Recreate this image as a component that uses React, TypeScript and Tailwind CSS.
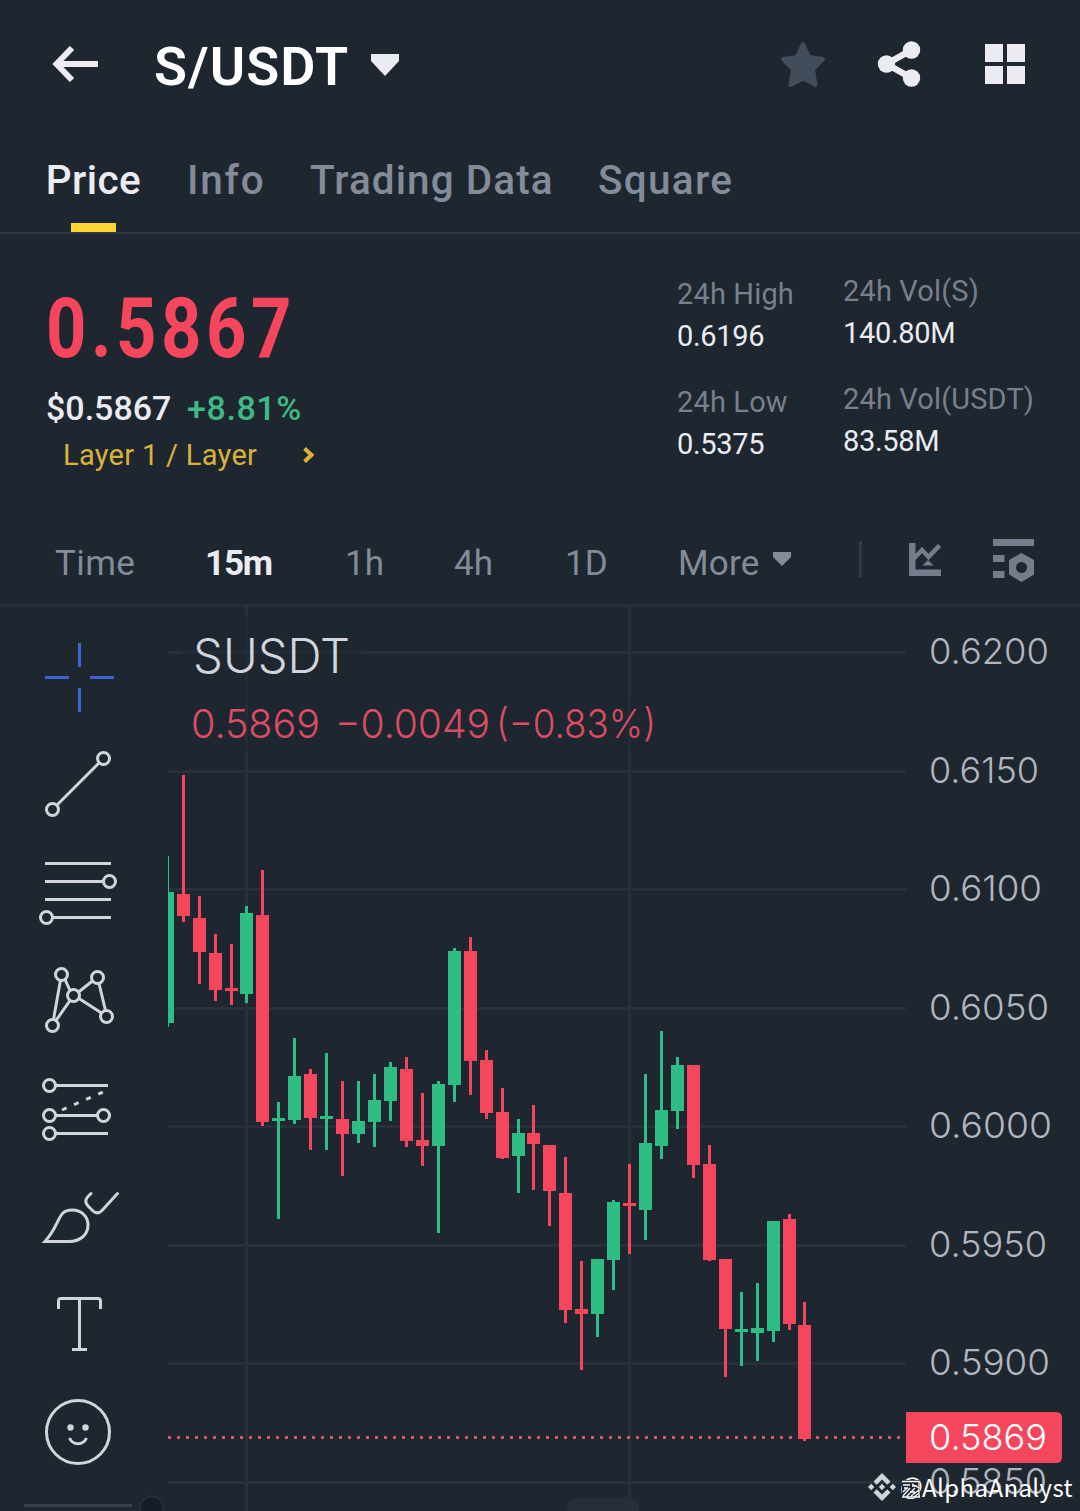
import React from "react";

const RED = "#f6465d";
const GREEN = "#2ebd85";

// [x, high, body top, body bottom, low, up]
const candles: [number, number, number, number, number, number][] = [
  [167.5, 856, 892, 1023, 1027, 1],
  [183.5, 775, 894, 916, 922, 0],
  [199.5, 896, 918, 952, 984, 0],
  [215.5, 934, 953, 990, 1001, 0],
  [231.5, 944, 988, 991, 1005, 0],
  [246.5, 906, 913, 994, 1003, 1],
  [262.5, 870, 915, 1122, 1126, 0],
  [278.5, 1102, 1118, 1121, 1219, 1],
  [294.5, 1038, 1076, 1120, 1124, 1],
  [310.5, 1069, 1074, 1118, 1150, 0],
  [326.5, 1053, 1116, 1119, 1150, 1],
  [342.5, 1081, 1119, 1134, 1176, 0],
  [358.5, 1081, 1121, 1134, 1143, 1],
  [374.5, 1074, 1100, 1122, 1147, 1],
  [390.5, 1062, 1067, 1101, 1121, 1],
  [406.5, 1057, 1069, 1141, 1147, 0],
  [422.5, 1093, 1140, 1146, 1166, 0],
  [438.5, 1081, 1084, 1146, 1233, 1],
  [454.5, 948, 951, 1085, 1102, 1],
  [470.5, 937, 951, 1061, 1095, 0],
  [486.5, 1050, 1060, 1113, 1119, 0],
  [502.5, 1088, 1112, 1158, 1159, 0],
  [518.5, 1119, 1133, 1156, 1193, 1],
  [533.5, 1105, 1133, 1144, 1190, 0],
  [549.5, 1145, 1145, 1191, 1226, 0],
  [565.5, 1157, 1193, 1310, 1323, 0],
  [581.5, 1261, 1309, 1314, 1370, 0],
  [597.5, 1259, 1259, 1314, 1337, 1],
  [613.5, 1200, 1202, 1260, 1290, 1],
  [629.5, 1164, 1203, 1206, 1254, 0],
  [645.5, 1074, 1143, 1210, 1240, 1],
  [661.5, 1031, 1110, 1146, 1159, 1],
  [677.5, 1057, 1065, 1111, 1129, 1],
  [693.5, 1065, 1065, 1165, 1178, 0],
  [709.5, 1145, 1164, 1260, 1261, 0],
  [725.5, 1259, 1259, 1329, 1377, 0],
  [741.5, 1292, 1329, 1332, 1366, 1],
  [757.5, 1283, 1328, 1333, 1361, 1],
  [773.5, 1221, 1221, 1331, 1342, 1],
  [789.5, 1214, 1219, 1324, 1330, 0],
  [804.5, 1302, 1325, 1439, 1441, 0],
];

// [label, y, text width]
const priceLevels: [string, number, number][] = [
  ["0.6200", 652.5, 120],
  ["0.6150", 771.5, 110],
  ["0.6100", 889.5, 113],
  ["0.6050", 1008.5, 120],
  ["0.6000", 1126.5, 123],
  ["0.5950", 1245.5, 118],
  ["0.5900", 1363.5, 121],
  ["0.5850", 1482.5, 118],
];

const Header = () => {
  return (
    <header className="flex h-[128px] items-center pl-[52px] pr-[55px]">
      <svg width="46" height="36" viewBox="0 0 46 36" className="shrink-0">
        <path
          d="M20 2 L4.5 18 L20 34 M4 18 H46"
          fill="none"
          stroke="#eaecf2"
          strokeWidth="6"
        />
      </svg>
      <h1 className="ml-[56px] w-[217px] shrink-0 whitespace-nowrap pt-[6px] text-[54px] font-semibold leading-[60px] tracking-[1.1px] text-white">
        S/USDT
      </h1>
      <svg width="28" height="22" viewBox="0 0 28 22" className="mt-[2px] shrink-0">
        <path d="M0 0 H28 V7 L14 22 L0 7 Z" fill="#eaecf2" />
      </svg>
      <div className="ml-auto flex items-center">
        <svg width="46" height="47" viewBox="0 0 46 47" className="shrink-0">
          <path
            d="M23 3 L29 16 L43 18 L33 28.500 L35.500 44 L23 37.500 L10.500 44 L13 28.500 L3 18 L17 16 Z"
            fill="#434c5a"
            stroke="#434c5a"
            strokeWidth="4"
            strokeLinejoin="round"
          />
        </svg>
        <svg width="44" height="48" viewBox="0 0 44 48" className="ml-[51px]">
          <path
            d="M34.500 10 L9.500 24 L34.500 38"
            fill="none"
            stroke="#eaecf2"
            strokeWidth="6.500"
          />
          <circle cx="34.500" cy="10" r="8.700" fill="#eaecf2" />
          <circle cx="9.500" cy="24" r="8.700" fill="#eaecf2" />
          <circle cx="34.500" cy="38" r="8.700" fill="#eaecf2" />
        </svg>
        <div className="ml-[64px] grid h-[40px] w-[40px] grid-cols-2 gap-[4.5px]">
          <span className="bg-[#eaecf2]" />
          <span className="bg-[#eaecf2]" />
          <span className="bg-[#eaecf2]" />
          <span className="bg-[#eaecf2]" />
        </div>
      </div>
    </header>
  );
};

const Tabs = () => {
  return (
    <nav className="flex h-[106px] border-b-2 border-[#323944] pl-[46px] pt-[27px] text-[40.5px] font-medium leading-[50px] text-[#848b99]">
      <div className="flex w-[95px] flex-col items-center">
        <span className="whitespace-nowrap tracking-[0.4px] text-[#eaecf2]">Price</span>
        <span className="mt-[18px] h-[9px] w-[45px] bg-[#fcd535]" />
      </div>
      <span className="ml-[46px] w-[78px] whitespace-nowrap tracking-[1.8px]">Info</span>
      <span className="ml-[45px] w-[243px] whitespace-nowrap tracking-[1.05px]">
        Trading Data
      </span>
      <span className="ml-[45px] whitespace-nowrap tracking-[1.3px]">Square</span>
    </nav>
  );
};

const Stat = ({ label, value }: { label: string; value: string }) => {
  return (
    <div className="flex flex-col whitespace-nowrap text-[29px] leading-[42px]">
      <span className="tracking-[0.15px] text-[#787f8d]">{label}</span>
      <span className="tracking-[-0.3px] text-[#eaecf2]">{value}</span>
    </div>
  );
};

const PriceSummary = () => {
  return (
    <section className="flex h-[287px] pl-[46px]">
      <div className="w-[631px] whitespace-nowrap pt-[55px]">
        <p className="origin-left scale-x-[0.85] text-[83px] font-bold leading-[80px] tracking-[5.3px] text-[#f6465d]">
          0.5867
        </p>
        <div className="mt-[19px] flex text-[34px] font-medium leading-[40px]">
          <span className="w-[141px] text-[#eaecf2]">$0.5867</span>
          <span className="tracking-[0.6px] text-[#3fb984]">+8.81%</span>
        </div>
        <div className="mt-[7px] flex items-center pl-[17px] text-[29px] leading-[40px] text-[#d9b23c]">
          <span className="w-[240px] tracking-[0.3px]">Layer 1 / Layer</span>
          <svg width="11" height="16" viewBox="0 0 11 16">
            <path
              d="M1.500 1.500 L8.500 8 L1.500 14.500"
              fill="none"
              stroke="#d9b23c"
              strokeWidth="4"
            />
          </svg>
        </div>
      </div>
      <div className="flex w-[166px] flex-col gap-6 pt-[39px]">
        <Stat label="24h High" value="0.6196" />
        <Stat label="24h Low" value="0.5375" />
      </div>
      <div className="flex flex-col gap-6 pt-[36px]">
        <Stat label="24h Vol(S)" value="140.80M" />
        <Stat label="24h Vol(USDT)" value="83.58M" />
      </div>
    </section>
  );
};

const Intervals = () => {
  return (
    <div className="flex h-[86px] items-center whitespace-nowrap border-b-[3px] border-[#272e38] pl-[55px] text-[35px] leading-[40px] text-[#848b99]">
      <span className="w-[150px] pt-[2px] tracking-[0.4px]">Time</span>
      <span className="w-[140px] pt-[2px] font-bold tracking-[-1.2px] text-[#eaecf2]">15m</span>
      <span className="w-[109px] pt-[2px]">1h</span>
      <span className="w-[111px] pt-[2px]">4h</span>
      <span className="w-[113px] pt-[2px]">1D</span>
      <span className="w-[95px] pt-[2px] tracking-[0.2px]">More</span>
      <svg width="18" height="14" viewBox="0 0 18 14" className="mb-[8px]">
        <path d="M0 0 H18 V5 L9 14 L0 5 Z" fill="#848b99" />
      </svg>
      <span className="mb-[8px] ml-[68px] h-[36px] w-[3px] bg-[#323944]" />
      <svg width="33" height="33" viewBox="0 0 33 33" className="mb-[6px] ml-[47px]">
        <path d="M0 0 H6.500 V26.500 H32 V33 H0 Z" fill="#767c8b" />
        <path
          d="M5 15.500 L13 7 L19.500 14 L30.500 2.500"
          fill="none"
          stroke="#767c8b"
          strokeWidth="4.500"
        />
        <path d="M19 17 L24.500 22.500 H13.500 Z" fill="#767c8b" />
      </svg>
      <svg width="42" height="43" viewBox="0 0 42 43" className="mb-[4px] ml-[50px]">
        <path
          d="M1 0 H42 V7 H1 Z M1 16 H12.500 V23 H1 Z M1 32 H12.500 V39 H1 Z"
          fill="#767c8b"
        />
        <path
          d="M29.500 14 L42 21 V35.500 L29.500 43 L17 35.500 V21 Z M29.500 23 A5.500 5.500 0 1 0 29.500 34 A5.500 5.500 0 1 0 29.500 23 Z"
          fill="#767c8b"
          fillRule="evenodd"
        />
      </svg>
    </div>
  );
};

const Tool = ({ children, color = "#d1d4dc" }: { children: React.ReactNode; color?: string }) => {
  return (
    <svg
      width="168"
      height="108"
      viewBox="0 0 168 108"
      fill="none"
      stroke={color}
      strokeWidth="3"
      className="shrink-0"
    >
      {children}
    </svg>
  );
};

const DrawingTools = () => {
  return (
    <aside className="flex w-[168px] shrink-0 flex-col pt-[17px]">
      {/* crosshair */}
      <Tool color="#3d64d2">
        <path d="M79.500 19 V43 M79.500 64 V88 M45 53.500 H69 M90 53.500 H114" />
      </Tool>
      {/* trend line */}
      <Tool>
        <circle cx="52.500" cy="77.500" r="6" />
        <circle cx="103.500" cy="26.500" r="6" />
        <path d="M57 73 L99 31" />
      </Tool>
      {/* fib retracement */}
      <Tool>
        <path d="M45 23.500 H111 M45 41.500 H103 M45 59.500 H111 M53 77.500 H111" />
        <circle cx="109.500" cy="41.500" r="6" />
        <circle cx="46.500" cy="77.500" r="6" />
      </Tool>
      {/* xabcd pattern */}
      <Tool>
        <path d="M60.500 32 L53.500 71.500 M65 31.500 L70 42.500 M70 52.500 L56 72.500 M78.500 44 L92.500 33 M79 50.500 L101.500 65 M99 35.500 L105.500 62.500" />
        <circle cx="61.500" cy="26.500" r="6" />
        <circle cx="97.500" cy="29.500" r="6" />
        <circle cx="73.500" cy="47.500" r="6" />
        <circle cx="52.500" cy="77.500" r="6" />
        <circle cx="106.500" cy="68.500" r="6" />
      </Tool>
      {/* position */}
      <Tool>
        <path d="M56 29.500 H108 M56 59.500 H97 M56 77.500 H108" />
        <path d="M62 54 L104 35.500" strokeDasharray="5 8.200" />
        <circle cx="49.500" cy="29.500" r="6" />
        <circle cx="49.500" cy="59.500" r="6" />
        <circle cx="103.500" cy="59.500" r="6" />
        <circle cx="49.500" cy="77.500" r="6" />
      </Tool>
      {/* brush */}
      <Tool>
        <path d="M45 77.500 C61 60 57 46 72 46 C82 46 88 53 88 61 C88 71 80 77.500 69 77.500 Z" />
        <path
          d="M91 29.500 L88 32.500 Q83.500 37 88 42 L93 47 Q97.500 51 102 46.500 L117.500 29.500"
          strokeLinecap="round"
        />
      </Tool>
      {/* text */}
      <Tool>
        <path d="M58.500 37 V29 Q58.500 26.500 61 26.500 H98 Q100.500 26.500 100.500 29 V37 M79.500 26.500 V77.500 M72 77.500 H87" />
      </Tool>
      {/* emoji */}
      <Tool>
        <circle cx="78" cy="52" r="31.500" />
        <circle cx="70.500" cy="47.500" r="3.200" fill="#d1d4dc" stroke="none" />
        <circle cx="85.500" cy="47.500" r="3.200" fill="#d1d4dc" stroke="none" />
        <path d="M69.500 58 A9.200 9.200 0 0 0 86.500 58" />
      </Tool>
      <svg width="168" height="23" viewBox="0 0 168 23" className="shrink-0">
        <path d="M24 17.500 H132" stroke="#3b414c" strokeWidth="3" />
        <circle cx="151.500" cy="20" r="11.500" fill="#161c27" stroke="#272e38" strokeWidth="2" />
      </svg>
    </aside>
  );
};

const Chart = () => {
  return (
    <svg
      width="912"
      height="907"
      viewBox="168 604 912 907"
      className="-mt-[3px] shrink-0"
      fontFamily="Inter, 'Liberation Sans', sans-serif"
      fontWeight="300"
    >
      <g stroke="#28303a" strokeWidth="3">
        {priceLevels.map(([label, y]) => (
          <path key={label} d={`M168 ${y} H906`} />
        ))}
        <path d="M246.500 604 V1511 M629.500 604 V1511" />
      </g>
      <path d="M567 1511 V1508 Q567 1498 577 1498 H629 Q639 1498 639 1508 V1511 Z" fill="#272e38" />

      {/* last price line */}
      <path d="M168 1437.500 H903" stroke="#dc566a" strokeWidth="3" strokeDasharray="3 6" />

      {candles.map(([x, high, top, bottom, low, up]) => (
        <g key={x} fill={up ? GREEN : RED}>
          <rect x={x - 1.5} y={high} width="3" height={low - high} />
          <rect x={x - 6.5} y={top} width="13" height={bottom - top} />
        </g>
      ))}

      {/* legend */}
      <rect x="181" y="616" width="181" height="78" fill="#1e2630" fillOpacity="0.5" />
      <rect x="181" y="694" width="482" height="58" fill="#1e2630" fillOpacity="0.5" />
      <text x="193" y="673" fontSize="47.500" textLength="157" lengthAdjust="spacingAndGlyphs" fill="#d1d4dc">
        SUSDT
      </text>
      <g fontSize="39" fill="#dc4c62">
        <text x="191" y="738" textLength="129" lengthAdjust="spacingAndGlyphs">0.5869</text>
        <text x="335" y="738" textLength="155" lengthAdjust="spacingAndGlyphs">−0.0049</text>
        <text x="496" y="738" textLength="160" lengthAdjust="spacingAndGlyphs">(−0.83%)</text>
      </g>

      {/* price scale */}
      <g fontSize="36" fill="#b2b5be">
        {priceLevels.map(([label, y, width]) => (
          <text key={label} x="929" y={y + 11.5} textLength={width} lengthAdjust="spacingAndGlyphs">
            {label}
          </text>
        ))}
      </g>
      <path d="M906 1412 H1056 Q1062 1412 1062 1418 V1457 Q1062 1463 1056 1463 H906 Z" fill={RED} />
      <text x="929" y="1450" fontSize="36" textLength="118" lengthAdjust="spacingAndGlyphs" fill="#fff">
        0.5869
      </text>
    </svg>
  );
};

const Watermark = () => {
  return (
    <div className="absolute bottom-[9px] right-[7px] flex items-center whitespace-nowrap text-white">
      <svg width="28" height="28" viewBox="0 0 28 28" fill="#d1d4dc">
        <path d="M14 0 L22.500 8.500 L19.300 11.700 L14 6.400 L8.700 11.700 L5.500 8.500 Z" />
        <path d="M14 28 L22.500 19.500 L19.300 16.300 L14 21.600 L8.700 16.300 L5.500 19.500 Z" />
        <path d="M14 10.800 L17.200 14 L14 17.200 L10.800 14 Z" />
        <path d="M3.200 10.800 L6.400 14 L3.200 17.200 L0 14 Z" />
        <path d="M24.800 10.800 L28 14 L24.800 17.200 L21.600 14 Z" />
      </svg>
      <div className="relative ml-[4px] w-[22px]">
        <span className="font-['Noto_Sans_CJK_SC','Noto_Sans',sans-serif] text-[24px] leading-[28px]">
          @
        </span>
        <svg width="18" height="18" viewBox="0 0 18 18" className="absolute left-[2px] top-[9px]">
          <path d="M0 0 H18 V18 H0 Z" fill="#20242c" />
          <path
            d="M0 1.500 H18 M1 5 H8 M10 4 L17 8 M1 16 L8 8 M4 17 L13 8 M2 8 H6 M9 16 L17 10 M0 17 H18 M17 1 V17 M1 12 L5 8 M12 17 L17 13 M8 12 H13 M10 6 H15"
            stroke="#fff"
            strokeWidth="1.300"
            fill="none"
          />
        </svg>
      </div>
      <span className="font-['Noto_Sans_CJK_SC','Noto_Sans',sans-serif] text-[24px] leading-[28px] tracking-[0.4px]">
        AlphaAnalyst
      </span>
    </div>
  );
};

const App = () => {
  return (
    <main className="relative h-[1511px] w-[1080px] overflow-hidden bg-[#1e2630] font-[Roboto,sans-serif]">
      <Header />
      <Tabs />
      <PriceSummary />
      <Intervals />
      <div className="flex">
        <DrawingTools />
        <Chart />
      </div>
      <Watermark />
    </main>
  );
};

export default App;
